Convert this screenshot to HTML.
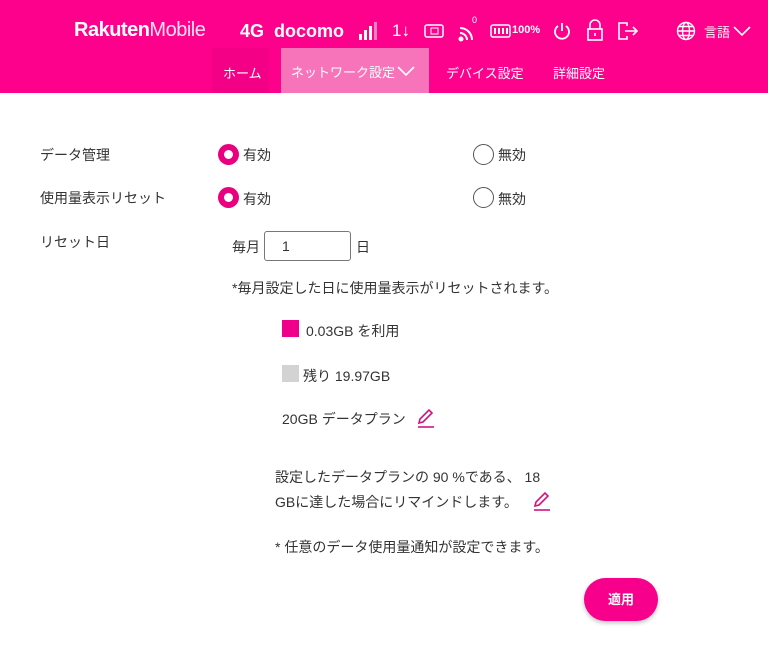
<!DOCTYPE html>
<html><head><meta charset="utf-8"><style>
*{margin:0;padding:0;box-sizing:border-box}
body{width:768px;height:658px;background:#fff;font-family:"Liberation Sans","Noto Sans CJK JP",sans-serif;color:#333;font-size:14px;position:relative;overflow:hidden}
.hdr{position:absolute;left:0;top:0;width:768px;height:93px;background:#fd008c}
.a{position:absolute;white-space:nowrap}
.w{color:#fff}
.radio{position:absolute;width:21px;height:21px;border-radius:50%}
.on{background:#e8007f;}
.on:after{content:"";position:absolute;left:6px;top:6px;width:9px;height:9px;border-radius:50%;background:#fff}
.off{border:1.5px solid #555;background:#fff}
</style></head><body>
<div class="hdr"></div>
<div class="a w" style="left:74px;top:19px;font-size:20px;letter-spacing:-0.5px"><b>Rakuten</b><span style="font-weight:normal;color:#ffe0f0">Mobile</span></div>
<div class="a w" style="left:240px;top:21px;font-size:18px;font-weight:bold">4G&nbsp; docomo</div>
<svg class="a" style="left:358px;top:22px" width="20" height="18"><g fill="#fff"><rect x="1" y="12" width="3" height="6"/><rect x="6" y="8" width="3" height="10"/><rect x="11" y="4" width="3" height="14"/></g><rect x="16" y="0" width="3" height="18" fill="#ff7ec0"/></svg>
<div class="a w" style="left:392px;top:21px;font-size:17px">1↓</div>
<svg class="a" style="left:424px;top:24px" width="20" height="14"><rect x="1" y="1" width="18" height="12" rx="2" fill="none" stroke="#fff" stroke-width="1.5"/><rect x="7" y="4" width="7" height="6" fill="none" stroke="#fff"/></svg>
<svg class="a" style="left:458px;top:20px" width="22" height="22" fill="none" stroke="#fff" stroke-width="2"><path d="M2 8a12 12 0 0 1 12 12"/><path d="M2 13a7 7 0 0 1 7 7"/><circle cx="3" cy="19" r="1.5" fill="#fff"/></svg>
<div class="a w" style="left:472px;top:15px;font-size:9px">0</div>
<svg class="a" style="left:490px;top:24px" width="22" height="14"><rect x="1" y="1" width="19" height="12" rx="2" fill="none" stroke="#fff" stroke-width="1.5"/><g fill="#fff"><rect x="4" y="4" width="2" height="6"/><rect x="8" y="4" width="2" height="6"/><rect x="12" y="4" width="2" height="6"/><rect x="16" y="4" width="2" height="6"/></g></svg>
<div class="a w" style="left:512px;top:24px;font-size:11px;font-weight:bold">100%</div>
<svg class="a" style="left:552px;top:21px" width="20" height="20" fill="none" stroke="#fff" stroke-width="1.8"><path d="M6 5A7 7 0 1 0 14 5"/><path d="M10 2v8"/></svg>
<svg class="a" style="left:586px;top:19px" width="18" height="22" fill="none" stroke="#fff" stroke-width="1.6"><path d="M4 10V6a5 5 0 0 1 10 0v4"/><rect x="2" y="10" width="14" height="11"/><path d="M9 14v3"/></svg>
<svg class="a" style="left:617px;top:21px" width="22" height="20" fill="none" stroke="#fff" stroke-width="1.6"><path d="M10 5V2H2v16h8v-3"/><path d="M8 10h12M16 6l4 4-4 4"/></svg>
<svg class="a" style="left:676px;top:21px" width="20" height="20" fill="none" stroke="#fff" stroke-width="1.4"><circle cx="10" cy="10" r="8.5"/><ellipse cx="10" cy="10" rx="3.5" ry="8.5"/><path d="M1.5 10h17M3 5.5h14M3 14.5h14"/></svg>
<div class="a w" style="left:704px;top:22px;font-size:13px">言語</div>
<svg class="a" style="left:733px;top:25px" width="18" height="12" fill="none" stroke="#fff" stroke-width="1.6"><path d="M1 2l8 8 8-8"/></svg>
<div class="a" style="left:212px;top:48px;width:57px;height:45px;background:#f30087"></div>
<div class="a" style="left:281px;top:48px;width:148px;height:45px;background:#f774bb"></div>
<div class="a w" style="left:223px;top:63px;font-size:13px">ホーム</div>
<div class="a w" style="left:291px;top:62px;font-size:13px">ネットワーク設定</div>
<svg class="a" style="left:397px;top:66px" width="18" height="11" fill="none" stroke="#fff" stroke-width="1.6"><path d="M1 1l8 8 8-8"/></svg>
<div class="a w" style="left:446px;top:63px;font-size:13px">デバイス設定</div>
<div class="a w" style="left:553px;top:63px;font-size:13px">詳細設定</div>

<div class="a" style="left:40px;top:145px">データ管理</div>
<div class="radio on" style="left:218px;top:144px"></div><div class="a" style="left:243px;top:145px">有効</div>
<div class="radio off" style="left:473px;top:144px"></div><div class="a" style="left:498px;top:145px">無効</div>
<div class="a" style="left:40px;top:188px">使用量表示リセット</div>
<div class="radio on" style="left:218px;top:187px"></div><div class="a" style="left:243px;top:189px">有効</div>
<div class="radio off" style="left:473px;top:187px"></div><div class="a" style="left:498px;top:189px">無効</div>
<div class="a" style="left:40px;top:232px">リセット日</div>
<div class="a" style="left:232px;top:237px">毎月</div>
<div class="a" style="left:264px;top:231px;width:87px;height:30px;border:1px solid #777;border-radius:3px;padding:6px 0 0 17px">1</div>
<div class="a" style="left:356px;top:237px">日</div>
<div class="a" style="left:232px;top:278px">*毎月設定した日に使用量表示がリセットされます。</div>
<div class="a" style="left:282px;top:320px;width:17px;height:17px;background:#f0008a"></div>
<div class="a" style="left:306px;top:321px">0.03GB を利用</div>
<div class="a" style="left:282px;top:365px;width:17px;height:17px;background:#d3d3d3"></div>
<div class="a" style="left:303px;top:366px">残り 19.97GB</div>
<div class="a" style="left:282px;top:409px">20GB データプラン</div>
<svg class="a" style="left:416px;top:407px" width="20" height="22" fill="none" stroke="#d0147f" stroke-width="1.6"><path d="M3 16l1-4 9-9 3 3-9 9z"/><path d="M2 20h16"/></svg>
<div class="a" style="left:275px;top:465px;line-height:25px">設定したデータプランの 90 %である、 18<br>GBに達した場合にリマインドします。</div>
<svg class="a" style="left:532px;top:490px" width="20" height="22" fill="none" stroke="#d0147f" stroke-width="1.6"><path d="M3 16l1-4 9-9 3 3-9 9z"/><path d="M2 20h16"/></svg>
<div class="a" style="left:275px;top:537px">* 任意のデータ使用量通知が設定できます。</div>
<div class="a" style="left:584px;top:578px;width:74px;height:43px;border-radius:22px;background:#f7008b;color:#fff;font-weight:bold;font-size:13px;text-align:center;line-height:43px;box-shadow:0 2px 4px rgba(0,0,0,.25)">適用</div>
</body></html>
